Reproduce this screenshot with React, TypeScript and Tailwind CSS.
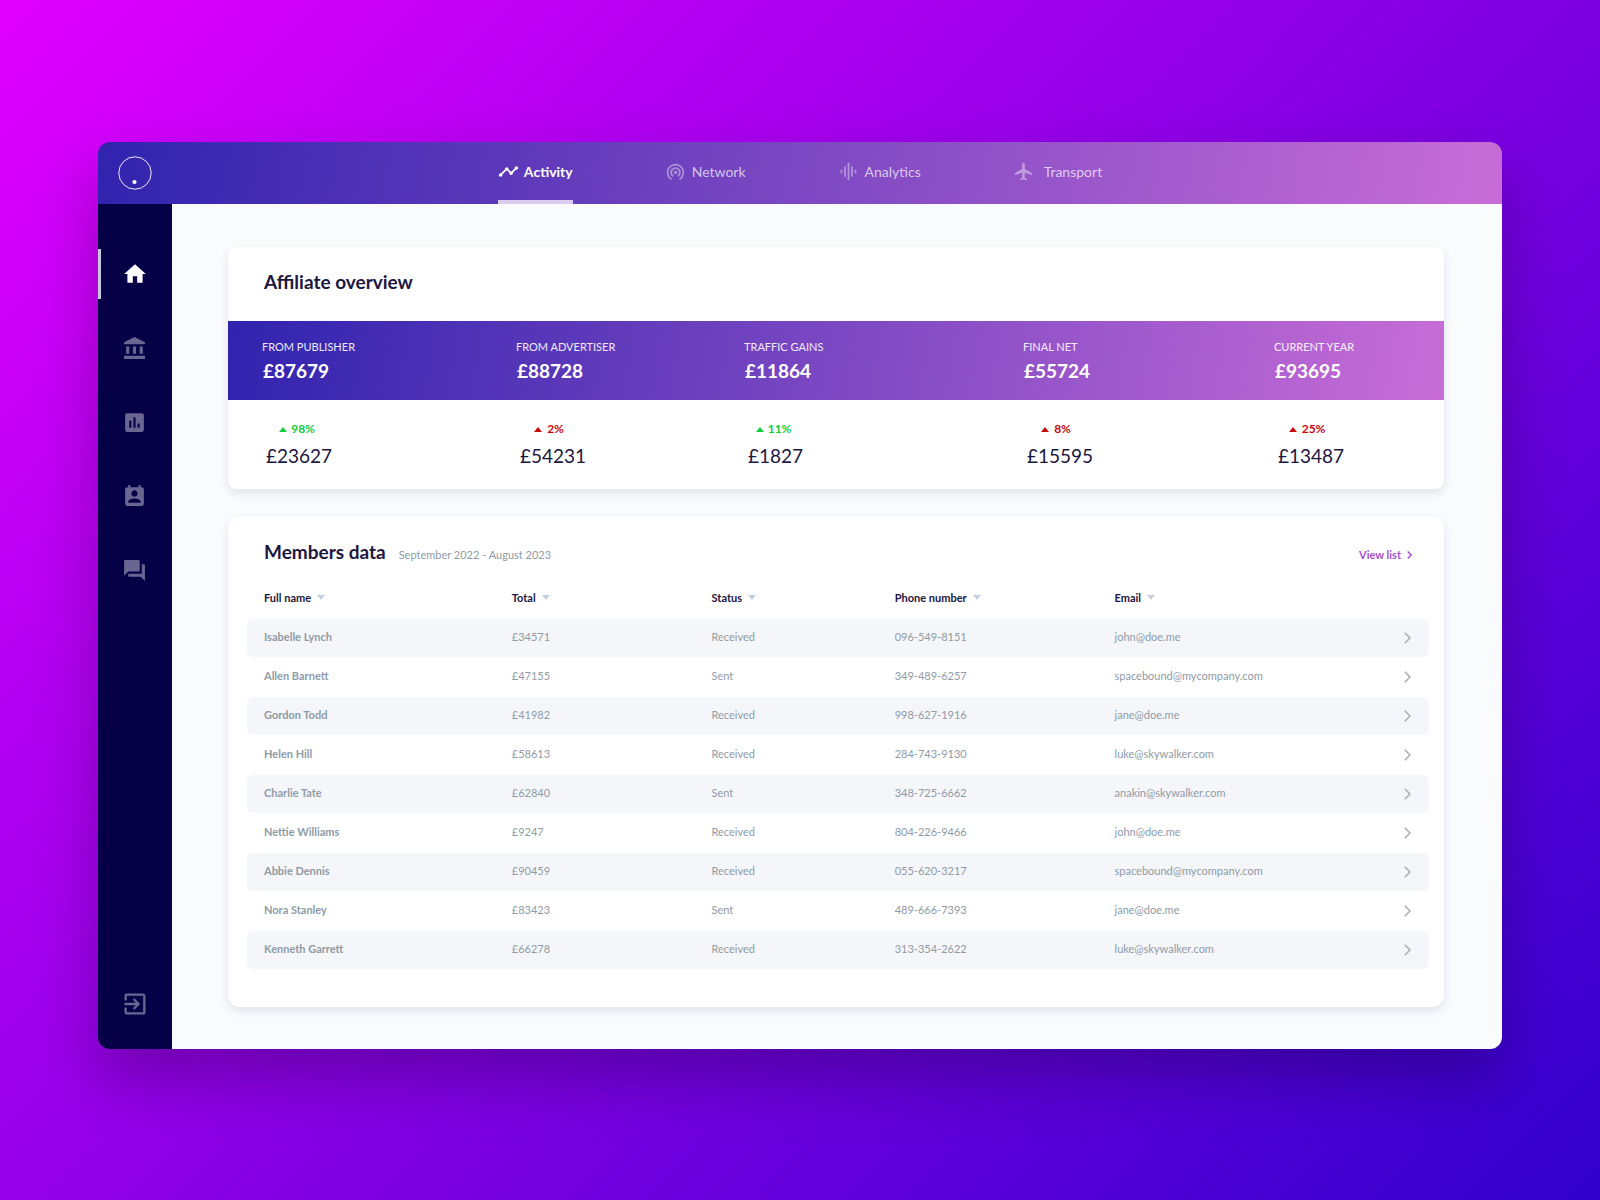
import type { ReactNode } from 'react';
import {
  MdAccountBalance,
  MdAssessment,
  MdExitToApp,
  MdForum,
  MdGraphicEq,
  MdHome,
  MdLocalAirport,
  MdPermContactCalendar,
  MdTimeline,
  MdWifiTethering,
} from 'react-icons/md';

const tabs: { label: string; icon: ReactNode; active?: boolean }[] = [
  { label: 'Activity', icon: <MdTimeline size={21} />, active: true },
  { label: 'Network', icon: <MdWifiTethering size={21} /> },
  { label: 'Analytics', icon: <MdGraphicEq size={21} /> },
  { label: 'Transport', icon: <MdLocalAirport size={21} className="mr-1" /> },
];

const sections: { label: string; icon: ReactNode; active?: boolean }[] = [
  { label: 'Home', icon: <MdHome size={26} />, active: true },
  { label: 'Accounts', icon: <MdAccountBalance size={25} /> },
  { label: 'Reports', icon: <MdAssessment size={25} /> },
  { label: 'Contacts', icon: <MdPermContactCalendar size={25} /> },
  { label: 'Messages', icon: <MdForum size={25} /> },
];

const stats = [
  { label: 'FROM PUBLISHER', total: '£87679', change: '98%', value: '£23627', good: true },
  { label: 'FROM ADVERTISER', total: '£88728', change: '2%', value: '£54231', good: false },
  { label: 'TRAFFIC GAINS', total: '£11864', change: '11%', value: '£1827', good: true },
  { label: 'FINAL NET', total: '£55724', change: '8%', value: '£15595', good: false },
  { label: 'CURRENT YEAR', total: '£93695', change: '25%', value: '£13487', good: false },
];

const columns = [
  { label: 'Full name', width: 'w-[22.4%]' },
  { label: 'Total', width: 'w-[16.9%]' },
  { label: 'Status', width: 'w-[15.5%]' },
  { label: 'Phone number', width: 'w-[18.6%]' },
  { label: 'Email', width: 'w-[20%]' },
];

const members = [
  ['Isabelle Lynch', '£34571', 'Received', '096-549-8151', 'john@doe.me'],
  ['Allen Barnett', '£47155', 'Sent', '349-489-6257', 'spacebound@mycompany.com'],
  ['Gordon Todd', '£41982', 'Received', '998-627-1916', 'jane@doe.me'],
  ['Helen Hill', '£58613', 'Received', '284-743-9130', 'luke@skywalker.com'],
  ['Charlie Tate', '£62840', 'Sent', '348-725-6662', 'anakin@skywalker.com'],
  ['Nettie Williams', '£9247', 'Received', '804-226-9466', 'john@doe.me'],
  ['Abbie Dennis', '£90459', 'Received', '055-620-3217', 'spacebound@mycompany.com'],
  ['Nora Stanley', '£83423', 'Sent', '489-666-7393', 'jane@doe.me'],
  ['Kenneth Garrett', '£66278', 'Received', '313-354-2622', 'luke@skywalker.com'],
];

const statGrid = 'grid grid-cols-[254fr_228fr_279fr_251fr_170fr] pl-[34px]';

function Chevron({ className }: { className: string }) {
  return (
    <svg viewBox="0 0 7 12" fill="none" stroke="currentColor" className={className} aria-hidden="true">
      <path d="M.8.8L6 6 .8 11.2" strokeWidth="1.5" vectorEffect="non-scaling-stroke" />
    </svg>
  );
}

function Header() {
  return (
    <header className="grid h-[62px] grid-cols-[1fr_auto_1fr] bg-[linear-gradient(100deg,#3023ae_0%,#c86dd7_100%)]">
      <a href="#" aria-label="Home page" className="ml-5 self-center justify-self-start">
        <svg viewBox="0 0 34 34" className="size-[34px]" aria-hidden="true">
          <circle cx="17" cy="17" r="16.2" fill="none" stroke="#fff" strokeOpacity=".9" />
          <circle cx="16.5" cy="26" r="2.1" fill="#fff" />
        </svg>
      </a>
      <nav className="flex gap-[92px]">
        {tabs.map((tab) => (
          <a
            key={tab.label}
            href="#"
            aria-current={tab.active ? 'page' : undefined}
            className={
              tab.active
                ? 'flex items-center gap-[5px] border-b-4 border-[#dccdf0] pt-px font-bold text-white'
                : 'flex items-center gap-[6px] border-b-4 border-transparent pt-px text-white/70'
            }
          >
            <span className={tab.active ? '' : 'opacity-60'}>{tab.icon}</span>
            <span className="text-[14px] leading-5">{tab.label}</span>
          </a>
        ))}
      </nav>
    </header>
  );
}

function Sidebar() {
  return (
    <nav className="flex w-[74px] shrink-0 flex-col bg-[#060047] pt-[45px] pb-5">
      <div className="flex flex-col gap-6">
        {sections.map((section) => (
          <a
            key={section.label}
            href="#"
            aria-label={section.label}
            className={
              section.active
                ? 'flex h-[50px] items-center justify-center border-l-[3px] border-[#c9c7da] pr-[4px] text-white'
                : 'flex h-[50px] items-center justify-center pr-px text-[#6a6691]'
            }
          >
            {section.icon}
          </a>
        ))}
      </div>
      <button
        type="button"
        aria-label="Log out"
        className="mt-auto flex h-[50px] items-center justify-center pr-px text-[#6a6691]"
      >
        <MdExitToApp size={28} />
      </button>
    </nav>
  );
}

function Overview() {
  return (
    <section className="rounded-lg bg-white shadow-[0_4px_10px_rgba(30,60,90,0.12)]">
      <h1 className="px-9 pt-[21px] pb-[25px] text-[19px] leading-7 font-bold">Affiliate overview</h1>
      <div className={`${statGrid} bg-[linear-gradient(100deg,#3023ae_0%,#c86dd7_100%)] pt-[18px] pb-[17px] text-white`}>
        {stats.map((stat) => (
          <div key={stat.label}>
            <p className="text-[11px] leading-4 text-white/90">{stat.label}</p>
            <p className="pl-px pt-1 text-[19px] leading-6 font-bold">{stat.total}</p>
          </div>
        ))}
      </div>
      <div className={`${statGrid} pt-[21px] pb-[21px]`}>
        {stats.map((stat) => (
          <div key={stat.label} className="w-fit pl-1">
            <p
              className={
                stat.good
                  ? 'flex items-center justify-center gap-1 pr-1 text-[12px] leading-4 font-bold text-[#0fce3c]'
                  : 'flex items-center justify-center gap-[5px] pr-2 text-[12px] leading-4 font-bold text-[#c9080d]'
              }
            >
              <svg viewBox="0 0 8 5" className="h-[5px] w-2" aria-hidden="true">
                <path d="M0 5L4 0l4 5z" fill="currentColor" />
              </svg>
              {stat.change}
            </p>
            <p className="pt-[7px] text-[19px] leading-6">{stat.value}</p>
          </div>
        ))}
      </div>
    </section>
  );
}

function Members() {
  return (
    <section className="rounded-xl bg-white pt-[22px] pr-[15px] pb-[37px] pl-[19px] shadow-[0_4px_10px_rgba(30,60,90,0.12)]">
      <div className="flex items-baseline pr-[17px] pl-[17px]">
        <h2 className="text-[19px] leading-7 font-bold">Members data</h2>
        <p className="ml-[13px] text-[11px] leading-4 text-[#8f9ba6]">September 2022 - August 2023</p>
        <a href="#" className="ml-auto flex items-center gap-[6px] text-[11px] leading-4 font-bold text-[#a54fd0]">
          View list
          <Chevron className="h-2 w-[5px]" />
        </a>
      </div>
      <table className="w-full table-fixed border-separate border-spacing-x-0 border-spacing-y-px text-left text-[11px] leading-4">
        <thead>
          <tr className="h-[51px]">
            {columns.map((column) => (
              <th key={column.label} scope="col" className={`${column.width} pt-[10px] align-middle font-bold first:pl-[17px]`}>
                <button type="button" className="flex items-center gap-[6px] whitespace-nowrap">
                  {column.label}
                  <svg viewBox="0 0 8 5" className="h-[5px] w-2" aria-hidden="true">
                    <path d="M0 0h8L4 5z" fill="#c5d0dc" />
                  </svg>
                </button>
              </th>
            ))}
            <td />
          </tr>
        </thead>
        <tbody className="text-[#8f9ba6]">
          {members.map((row) => (
            <tr key={row[0]} className="group h-[38px]">
              {row.map((cell, index) => (
                <td
                  key={index}
                  className="pb-[2px] whitespace-nowrap first:rounded-l-md first:pl-[17px] first:font-bold group-odd:bg-[#f5f6fa]"
                >
                  {cell}
                </td>
              ))}
              <td className="rounded-r-md pr-[18px] group-odd:bg-[#f5f6fa]">
                <button type="button" aria-label={`Open ${row[0]}`} className="ml-auto block text-[#a9acb4]">
                  <Chevron className="h-3 w-[7px]" />
                </button>
              </td>
            </tr>
          ))}
        </tbody>
      </table>
    </section>
  );
}

export default function App() {
  return (
    <div className="min-h-screen bg-[linear-gradient(135deg,#e100ff_0%,#3000cc_100%)] px-[98px] pt-[142px] pb-[151px] font-['Lato',sans-serif] text-[#1d1641]">
      <div className="overflow-hidden rounded-xl shadow-[0_30px_60px_rgba(0,0,0,0.25)]">
        <Header />
        <div className="flex">
          <Sidebar />
          <main className="flex min-w-0 flex-1 flex-col gap-[27px] bg-[#fafbfd] pt-[43px] pr-[58px] pb-[42px] pl-[56px]">
            <Overview />
            <Members />
          </main>
        </div>
      </div>
    </div>
  );
}
